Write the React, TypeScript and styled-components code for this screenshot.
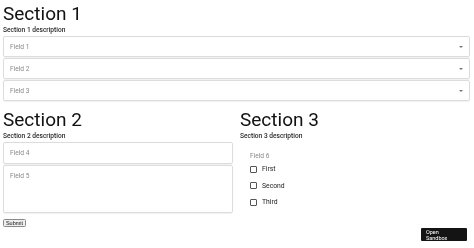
import styled, { createGlobalStyle } from 'styled-components';

const GlobalStyle = createGlobalStyle`
  body {
    margin: 0;
    background: #fff;
    font-family: Roboto, 'Liberation Sans', sans-serif;
    color: #111;
    -webkit-font-smoothing: antialiased;
  }
`;

const Page = styled.div`
  padding: 2px 4px 0 3px;
  will-change: transform;
`;

const Section = styled.section``;

const Title = styled.h2`
  margin: 0;
  font-size: 19px;
  line-height: 23px;
  font-weight: 400;
  color: #111;
`;

const Description = styled.p`
  margin: 1px 0 1px;
  font-size: 6.6px;
  line-height: 9px;
  font-weight: 500;
  color: #2a2a2a;
`;

const FieldStack = styled.div`
  display: flex;
  flex-direction: column;
  gap: 1px;
`;

const Box = styled.div<{ $height?: number; $top?: boolean }>`
  box-sizing: border-box;
  height: ${({ $height = 21 }) => $height}px;
  border: 1px solid #dcdcdc;
  border-radius: 2px;
  box-shadow: 0 0.5px 1px rgba(0, 0, 0, 0.06);
  display: flex;
  align-items: ${({ $top }) => ($top ? 'flex-start' : 'center')};
  justify-content: space-between;
  padding: ${({ $top }) => ($top ? '6px 8px 0 6px' : '0 7px 0 6px')};
  font-size: 6.6px;
  color: #888;
`;

const Chevron = styled.span`
  width: 0;
  height: 0;
  border-left: 2px solid transparent;
  border-right: 2px solid transparent;
  border-top: 2.5px solid #777;
  margin-right: -1px;
`;

const Columns = styled.div`
  display: grid;
  grid-template-columns: 230px 1fr;
  column-gap: 7px;
  margin-top: 7px;
`;

const Submit = styled.button`
  display: block;
  margin-top: 6px;
  height: 8px;
  width: 23px;
  padding: 0;
  font-family: 'Liberation Sans', sans-serif;
  font-size: 5.5px;
  line-height: 6px;
  color: #111;
  background: #efefef;
  border: 1px solid #8a8a8a;
  border-radius: 1.5px;
`;

const Group = styled.div`
  padding: 10px 0 0 10px;
`;

const Legend = styled.div`
  font-size: 6.6px;
  line-height: 9px;
  color: #888;
  margin-bottom: 4px;
`;

const Options = styled.div`
  display: flex;
  flex-direction: column;
  gap: 8.5px;
`;

const Option = styled.label`
  display: flex;
  align-items: center;
  gap: 5px;
  font-size: 6.8px;
  line-height: 8px;
  color: #222;
`;

const Check = styled.span`
  box-sizing: border-box;
  width: 7px;
  height: 7px;
  border: 1px solid #555;
  border-radius: 1px;
`;

const SandboxButton = styled.div`
  position: fixed;
  right: 7px;
  bottom: 7px;
  width: 46px;
  height: 13px;
  box-sizing: border-box;
  background: #141414;
  border-radius: 1px;
  padding: 0.5px 0 0 5px;
  color: #fff;
  font-size: 5.5px;
  line-height: 6px;
  will-change: transform;
`;

const selects = ['Field 1', 'Field 2', 'Field 3'];
const choices = ['First', 'Second', 'Third'];

export default function App() {
  return (
    <>
      <GlobalStyle />
      <Page>
        <Section>
          <Title>Section 1</Title>
          <Description>Section 1 description</Description>
          <FieldStack>
            {selects.map((f) => (
              <Box key={f}>
                {f}
                <Chevron />
              </Box>
            ))}
          </FieldStack>
        </Section>
        <Columns>
          <Section>
            <Title>Section 2</Title>
            <Description>Section 2 description</Description>
            <FieldStack>
              <Box $height={22}>Field 4</Box>
              <Box $height={48} $top>
                Field 5
              </Box>
            </FieldStack>
            <Submit>Submit</Submit>
          </Section>
          <Section>
            <Title>Section 3</Title>
            <Description>Section 3 description</Description>
            <Group>
              <Legend>Field 6</Legend>
              <Options>
                {choices.map((c) => (
                  <Option key={c}>
                    <Check />
                    {c}
                  </Option>
                ))}
              </Options>
            </Group>
          </Section>
        </Columns>
      </Page>
      <SandboxButton>
        Open
        <br />
        Sandbox
      </SandboxButton>
    </>
  );
}
